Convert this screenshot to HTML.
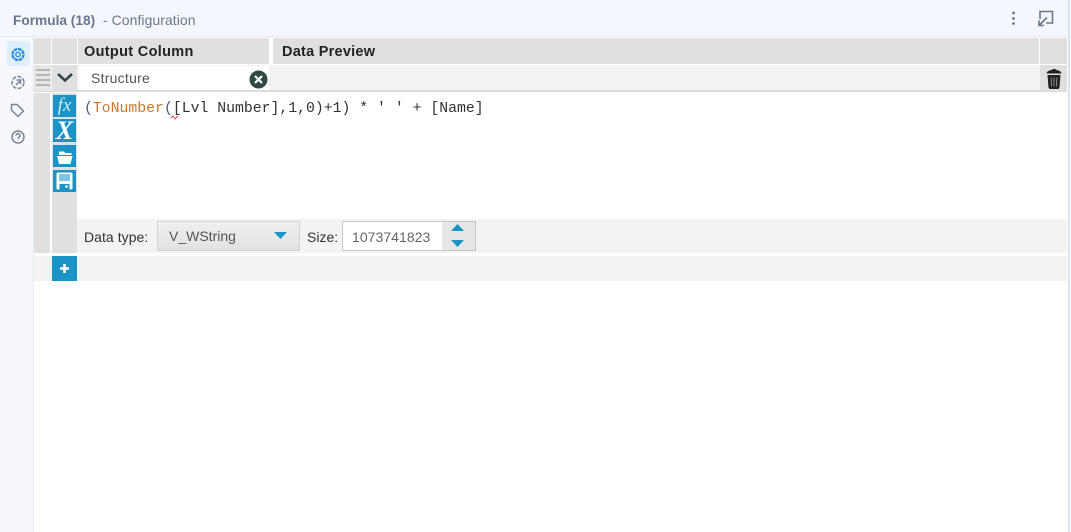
<!DOCTYPE html>
<html><head><meta charset="utf-8"><style>
*{box-sizing:border-box}
html,body{margin:0;padding:0}
body{width:1071px;height:532px;position:relative;overflow:hidden;background:#fff;font-family:"Liberation Sans",sans-serif;color:#333}
.a{position:absolute}
.t{position:absolute;white-space:nowrap}
.blue{background:#1a94c6}
</style></head><body>
<div class="a" style="left:0;top:0;width:1068px;height:37px;background:#f4f7fd;border-bottom:1px solid #e4e9f3"></div>
<div class="a" style="left:0;top:37px;width:34px;height:495px;background:#f6f8fd;border-right:1px solid #e6eaf2"></div>
<div class="a" style="left:1068px;top:0;width:2px;height:532px;background:#d6e6f6"></div>
<div class="t" style="left:13px;top:13px;font-size:13.7px;font-weight:bold;color:#6b7689">Formula (18)</div>
<div class="t" style="left:103px;top:12px;font-size:14px;color:#6b7689;letter-spacing:.05px">- Configuration</div>
<svg class="a" style="left:1005px;top:8px" width="55" height="22"><g fill="#6b7689"><circle cx="8.500" cy="5" r="1.400"/><circle cx="8.500" cy="10.500" r="1.400"/><circle cx="8.500" cy="15.500" r="1.400"/></g><g fill="none" stroke="#6b7689" stroke-width="1.600"><path d="M35 11V3.500h12.500V15H41"/><path d="M42 9.500L34 17.500M34 12.500v5h5"/></g></svg>

<div class="a" style="left:7px;top:41px;width:23px;height:25px;background:#dfeefc;border-radius:3px"></div>
<svg class="a" style="left:8px;top:44px" width="20" height="110" fill="none" stroke="#7a8494" stroke-width="1.500"><circle cx="10" cy="10.500" r="5.500" stroke="#2e8fdc" stroke-width="2.400" stroke-dasharray="3.600 .7"/><circle cx="10" cy="10.500" r="2.200" stroke="#2e8fdc" stroke-width="1.400"/><circle cx="10" cy="38.500" r="6" stroke-dasharray="4 1.500"/><path d="M8 41l4.500-4.500M8.500 36h4v4"/><path d="M3.500 60.500v5.500l6.500 6.500 5.500-5.500-6.500-6.500z" stroke-width="1.500"/><circle cx="10" cy="93" r="6"/><path d="M8 91.500a2 2 0 1 1 3 1.800c-.7.400-1 .8-1 1.600M10 96.500v.5"/></svg>

<div class="a" style="left:34px;top:38px;width:17px;height:26px;background:#e0e0e0"></div>
<div class="a" style="left:52px;top:38px;width:25px;height:26px;background:#e0e0e0"></div>
<div class="a" style="left:78px;top:38px;width:191px;height:26px;background:#e0e0e0"></div>
<div class="a" style="left:273px;top:38px;width:766px;height:26px;background:#e0e0e0"></div>
<div class="a" style="left:1040px;top:38px;width:27px;height:26px;background:#e0e0e0"></div>
<div class="t" style="left:84px;top:44px;font-size:14.500px;font-weight:bold;color:#222;letter-spacing:.32px">Output Column</div>
<div class="t" style="left:282px;top:44px;font-size:14.500px;font-weight:bold;color:#222;letter-spacing:.25px">Data Preview</div>

<div class="a" style="left:34px;top:65px;width:1033px;height:27px;background:#f3f3f3;border-bottom:2px solid #dcdcdc"></div>
<div class="a" style="left:34px;top:65px;width:17px;height:26px;background:#e6e6e6"></div>
<div class="a" style="left:52px;top:65px;width:25px;height:26px;background:#e0e0e0"></div>
<div class="a" style="left:36px;top:69px;width:14px;height:2px;background:#b5b5b5;box-shadow:0 5px 0 #b5b5b5,0 10px 0 #b5b5b5,0 15px 0 #b5b5b5"></div>
<svg class="a" style="left:56px;top:72px" width="18" height="12"><path d="M2 2l7 6.500 7-6.500" fill="none" stroke="#2f4a4a" stroke-width="2.600"/></svg>
<div class="a" style="left:79px;top:66px;width:190px;height:24px;background:#fff"></div>
<div class="t" style="left:91px;top:70px;font-size:14px;color:#555;letter-spacing:.25px">Structure</div>
<svg class="a" style="left:249px;top:70px" width="19" height="19"><circle cx="9.500" cy="9.500" r="9" fill="#2f4a45"/><path d="M6 6l7 7M13 6l-7 7" stroke="#fff" stroke-width="2.200"/></svg>
<div class="a" style="left:1040px;top:65px;width:27px;height:26px;background:#e0e0e0"></div>
<svg class="a" style="left:1045px;top:67px" width="18" height="24"><path d="M1.500 6.500C2 4 5 3 7 3c0-1.500 4-1.500 4 0 2 0 5 1 5.500 3.500z" fill="#222"/><path d="M2.500 8h13l-1 12.500c-.1 1-1 1.500-2 1.500h-7c-1 0-1.900-.5-2-1.500z" fill="#222"/><path d="M6.200 10.500l.4 9M9 10.500v9M11.800 10.500l-.4 9" stroke="#8a8a8a" stroke-width="1"/></svg>

<div class="a" style="left:34px;top:93px;width:16px;height:160px;background:#e0e0e0"></div>
<div class="a" style="left:52px;top:93px;width:25px;height:160px;background:#e0e0e0"></div>
<div class="a blue" style="left:53px;top:95px;width:23px;height:22px"></div>
<div class="t" style="left:54px;top:95px;width:21px;text-align:center;font-family:'Liberation Serif',serif;font-style:italic;font-size:19px;color:#cfe9f4">fx</div>
<div class="a blue" style="left:53px;top:119px;width:23px;height:23px"></div>
<div class="t" style="left:53px;top:116px;width:23px;text-align:center;font-family:'Liberation Serif',serif;font-style:italic;font-weight:bold;font-size:26px;color:#fff">X</div>
<div class="a blue" style="left:53px;top:145px;width:23px;height:22px"></div>
<svg class="a" style="left:53px;top:145px" width="23" height="22"><path d="M6 10V6.500h5l1.500 1.500h6v2z" fill="#fff"/><path d="M4 11h15.500l-2 8H6z" fill="#fff"/></svg>
<div class="a blue" style="left:53px;top:170px;width:23px;height:22px"></div>
<svg class="a" style="left:53px;top:170px" width="23" height="22"><rect x="3.500" y="2.500" width="16" height="17" rx="1.500" fill="#fff"/><rect x="6" y="4" width="11" height="7" fill="#7fc4e2"/><rect x="6.500" y="14" width="10" height="5.500" fill="#1a94c6"/><rect x="12" y="15.500" width="3" height="2" fill="#fff"/></svg>

<div class="t" style="left:84px;top:101px;font-family:'Liberation Mono',monospace;font-size:14.800px;color:#333"><span style="color:#4a5a8a">(</span><span style="color:#c9792b">ToNumber</span><span style="color:#4a5a8a">(</span>[Lvl Number],1,0)+1) * ' ' + [Name]</div>
<svg class="a" style="left:170px;top:113px" width="10" height="7"><path d="M1 5l2-2 2 3 3-3" fill="none" stroke="#e04040" stroke-width=".9"/></svg>

<div class="a" style="left:77px;top:219px;width:990px;height:34px;background:#f3f3f3"></div>
<div class="t" style="left:84px;top:229px;font-size:14px;color:#333;letter-spacing:.05px">Data type:</div>
<div class="a" style="left:157px;top:221px;width:143px;height:30px;background:linear-gradient(#f0f0f0,#e2e2e2);border:1px solid #d4d4d4"></div>
<div class="t" style="left:169px;top:228px;font-size:14px;color:#555">V_WString</div>
<svg class="a" style="left:274px;top:232px" width="14" height="8"><path d="M0 0h13l-6.500 7z" fill="#1a94c6"/></svg>
<div class="t" style="left:307px;top:229px;font-size:14px;color:#333">Size:</div>
<div class="a" style="left:342px;top:221px;width:134px;height:30px;background:#e6e6e6;border:1px solid #c8c8c8"></div>
<div class="a" style="left:343px;top:222px;width:99px;height:28px;background:#fff"></div>
<div class="t" style="left:352px;top:229px;font-size:14px;color:#666;letter-spacing:.05px">1073741823</div>
<svg class="a" style="left:451px;top:224px" width="14" height="24" fill="#1a94c6"><path d="M0 7L6.500 0 13 7z"/><path d="M0 16h13l-6.500 7z"/></svg>

<div class="a" style="left:34px;top:256px;width:1033px;height:25px;background:#f3f3f3"></div>
<div class="a blue" style="left:52px;top:256px;width:25px;height:25px"></div>
<svg class="a" style="left:52px;top:256px" width="25" height="25"><path d="M12.500 8v9M8 12.500h9" stroke="#fff" stroke-width="2.600"/></svg>
</body></html>
